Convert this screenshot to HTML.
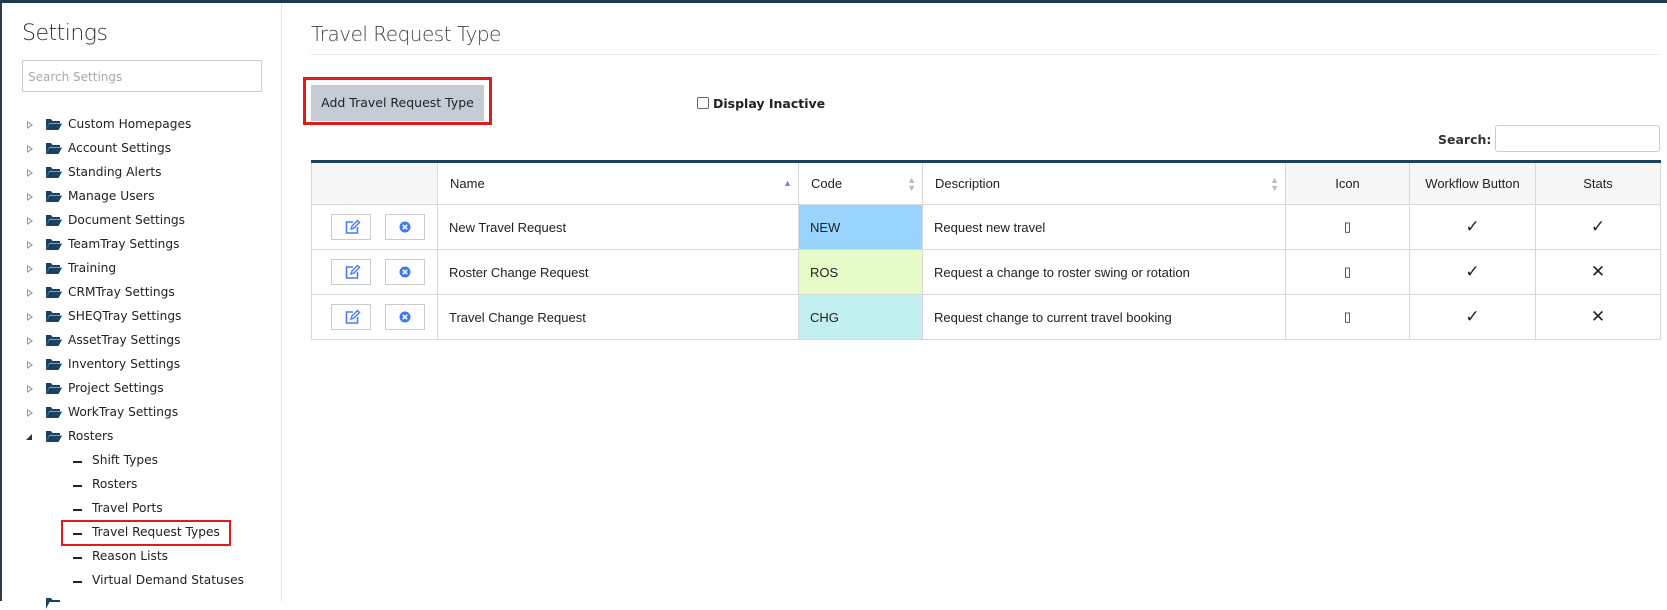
<!DOCTYPE html>
<html><head><meta charset="utf-8"><style>
*{box-sizing:border-box;margin:0;padding:0}
body{width:1667px;height:601px;overflow:hidden;background:#fff;font-family:"Liberation Sans",Arial,sans-serif;position:relative;color:#222}
.abs{position:absolute}
.side{font-family:"DejaVu Sans","Liberation Sans",sans-serif;font-size:12.2px;color:#222}
.tri{position:absolute;left:27px;width:0;height:0;border-top:4px solid transparent;border-bottom:4px solid transparent;border-left:6px solid #999}
.tri:after{content:"";position:absolute;left:-5px;top:-2.5px;border-top:2.5px solid transparent;border-bottom:2.5px solid transparent;border-left:3.5px solid #fff}
.fold{position:absolute;left:46px}
.item{position:absolute;left:68px;white-space:nowrap}
.dash{position:absolute;left:73px;width:9px;height:2px;background:#222}
.child{position:absolute;left:92px;white-space:nowrap}
table{border-collapse:collapse;position:absolute;left:311px;top:160px;width:1349px;font-size:13px;table-layout:fixed}
th,td{border:1px solid #d8d8d8;height:45px;vertical-align:middle}
th{font-weight:normal;text-align:left;padding-left:12px;height:43px;position:relative}
thead tr{border-top:3px solid #1b4361}
.g{background:#f6f6f6}
.c{text-align:center;padding-left:0}
.ck{font-size:17px;font-family:"DejaVu Sans",sans-serif}
td{padding-left:11px}
.btn{display:inline-block;width:40px;height:26px;border:1px solid #ccc;vertical-align:middle;position:relative}
.sort{position:absolute;right:6px;top:13px;font-size:9px;line-height:8px;color:#bbb}
</style></head><body>
<div class="abs" style="left:0;top:0;width:1667px;height:3px;background:#1b3a50"></div>
<div class="abs" style="left:0;top:0;width:2px;height:601px;background:#2a3a48"></div>
<div class="abs" style="left:281px;top:3px;width:1px;height:598px;background:#e6e6e6"></div>

<div class="abs" style="left:22px;top:21px;font-family:'DejaVu Sans',sans-serif;font-size:22px;color:#333;font-weight:300;letter-spacing:-0.5px">Settings</div>
<div class="abs" style="left:22px;top:60px;width:240px;height:32px;border:1px solid #ccc;border-radius:2px;font-family:'DejaVu Sans',sans-serif;font-size:12px;color:#aaa;padding:9px 5px">Search Settings</div>

<div class="abs side" style="left:61px;top:520px;width:170px;height:26px;border:2px solid #e01b1b"></div>

<div class="abs" style="left:311px;top:22px;font-family:'DejaVu Sans',sans-serif;font-size:20px;font-weight:300;color:#444;letter-spacing:-0.5px">Travel Request Type</div>
<div class="abs" style="left:311px;top:54px;width:1349px;height:1px;background:#e8e8e8"></div>

<div class="abs" style="left:303px;top:77px;width:189px;height:48px;border:3px solid #e01b1b"></div>
<div class="abs" style="left:311px;top:85px;width:173px;height:36px;background:#c5ccd6;font-family:'DejaVu Sans',sans-serif;font-size:12.5px;color:#222;text-align:center;line-height:36px">Add Travel Request Type</div>

<div class="abs" style="left:697px;top:97px;width:12px;height:12px;border:1px solid #666;border-radius:2px"></div>
<div class="abs" style="left:713px;top:96px;font-family:'DejaVu Sans',sans-serif;font-size:12.5px;font-weight:bold;color:#222">Display Inactive</div>

<div class="abs" style="left:1438px;top:132px;font-family:'DejaVu Sans',sans-serif;font-size:12.5px;font-weight:bold;color:#333">Search:</div>
<div class="abs" style="left:1495px;top:125px;width:165px;height:27px;border:1px solid #ccc;border-radius:3px"></div>

<table>
<colgroup><col style="width:126px"><col style="width:361px"><col style="width:124px"><col style="width:363px"><col style="width:124px"><col style="width:126px"><col style="width:125px"></colgroup>
<thead><tr>
<th class="g"></th>
<th>Name<span class="sort" style="color:#7b7fd8;top:16px">▲</span></th>
<th>Code<span class="sort">▲<br>▼</span></th>
<th>Description<span class="sort">▲<br>▼</span></th>
<th class="g c">Icon</th><th class="g c">Workflow Button</th><th class="g c">Stats</th>
</tr></thead>
<tbody>
<tr><td style="padding-left:19px"><span class="btn" style="margin-right:14px"><svg width="40" height="26" style="position:absolute;left:-1px;top:-1px"><path d="M22 8h-6.5v11h11v-6" fill="none" stroke="#4a7af0" stroke-width="1.6"/><path d="M20 15l1-3 5.5-5.5 2 2-5.5 5.5z" fill="none" stroke="#4a7af0" stroke-width="1.4"/></svg></span><span class="btn"><svg width="40" height="26" style="position:absolute;left:-1px;top:-1px"><circle cx="20" cy="13" r="5.5" fill="#3e79ee"/><path d="M17.8 10.8l4.4 4.4M22.2 10.8l-4.4 4.4" stroke="#fff" stroke-width="1.6"/></svg></span></td>
<td>New Travel Request</td><td style="background:#99d3ff">NEW</td><td>Request new travel</td><td class="c">▯</td><td class="c ck">✓</td><td class="c ck">✓</td></tr>
<tr><td style="padding-left:19px"><span class="btn" style="margin-right:14px"><svg width="40" height="26" style="position:absolute;left:-1px;top:-1px"><path d="M22 8h-6.5v11h11v-6" fill="none" stroke="#4a7af0" stroke-width="1.6"/><path d="M20 15l1-3 5.5-5.5 2 2-5.5 5.5z" fill="none" stroke="#4a7af0" stroke-width="1.4"/></svg></span><span class="btn"><svg width="40" height="26" style="position:absolute;left:-1px;top:-1px"><circle cx="20" cy="13" r="5.5" fill="#3e79ee"/><path d="M17.8 10.8l4.4 4.4M22.2 10.8l-4.4 4.4" stroke="#fff" stroke-width="1.6"/></svg></span></td>
<td>Roster Change Request</td><td style="background:#e6fcc8">ROS</td><td>Request a change to roster swing or rotation</td><td class="c">▯</td><td class="c ck">✓</td><td class="c ck">✕</td></tr>
<tr><td style="padding-left:19px"><span class="btn" style="margin-right:14px"><svg width="40" height="26" style="position:absolute;left:-1px;top:-1px"><path d="M22 8h-6.5v11h11v-6" fill="none" stroke="#4a7af0" stroke-width="1.6"/><path d="M20 15l1-3 5.5-5.5 2 2-5.5 5.5z" fill="none" stroke="#4a7af0" stroke-width="1.4"/></svg></span><span class="btn"><svg width="40" height="26" style="position:absolute;left:-1px;top:-1px"><circle cx="20" cy="13" r="5.5" fill="#3e79ee"/><path d="M17.8 10.8l4.4 4.4M22.2 10.8l-4.4 4.4" stroke="#fff" stroke-width="1.6"/></svg></span></td>
<td>Travel Change Request</td><td style="background:#c2efef">CHG</td><td>Request change to current travel booking</td><td class="c">▯</td><td class="c ck">✓</td><td class="c ck">✕</td></tr>
</tbody></table>

<div class="side" style="position:absolute;left:0;top:1px">
<div class="tri" style="top:120px"></div><svg class="fold" style="top:117px" width="16" height="13"><path d="M0 1h5l1.5 2H14v2H3.5L0 12z" fill="#1b4361"/><path d="M3.5 5.5H16L12.5 12H0z" fill="#1b4361"/></svg><div class="item" style="top:116px">Custom Homepages</div>
<div class="tri" style="top:144px"></div><svg class="fold" style="top:141px" width="16" height="13"><path d="M0 1h5l1.5 2H14v2H3.5L0 12z" fill="#1b4361"/><path d="M3.5 5.5H16L12.5 12H0z" fill="#1b4361"/></svg><div class="item" style="top:140px">Account Settings</div>
<div class="tri" style="top:168px"></div><svg class="fold" style="top:165px" width="16" height="13"><path d="M0 1h5l1.5 2H14v2H3.5L0 12z" fill="#1b4361"/><path d="M3.5 5.5H16L12.5 12H0z" fill="#1b4361"/></svg><div class="item" style="top:164px">Standing Alerts</div>
<div class="tri" style="top:192px"></div><svg class="fold" style="top:189px" width="16" height="13"><path d="M0 1h5l1.5 2H14v2H3.5L0 12z" fill="#1b4361"/><path d="M3.5 5.5H16L12.5 12H0z" fill="#1b4361"/></svg><div class="item" style="top:188px">Manage Users</div>
<div class="tri" style="top:216px"></div><svg class="fold" style="top:213px" width="16" height="13"><path d="M0 1h5l1.5 2H14v2H3.5L0 12z" fill="#1b4361"/><path d="M3.5 5.5H16L12.5 12H0z" fill="#1b4361"/></svg><div class="item" style="top:212px">Document Settings</div>
<div class="tri" style="top:240px"></div><svg class="fold" style="top:237px" width="16" height="13"><path d="M0 1h5l1.5 2H14v2H3.5L0 12z" fill="#1b4361"/><path d="M3.5 5.5H16L12.5 12H0z" fill="#1b4361"/></svg><div class="item" style="top:236px">TeamTray Settings</div>
<div class="tri" style="top:264px"></div><svg class="fold" style="top:261px" width="16" height="13"><path d="M0 1h5l1.5 2H14v2H3.5L0 12z" fill="#1b4361"/><path d="M3.5 5.5H16L12.5 12H0z" fill="#1b4361"/></svg><div class="item" style="top:260px">Training</div>
<div class="tri" style="top:288px"></div><svg class="fold" style="top:285px" width="16" height="13"><path d="M0 1h5l1.5 2H14v2H3.5L0 12z" fill="#1b4361"/><path d="M3.5 5.5H16L12.5 12H0z" fill="#1b4361"/></svg><div class="item" style="top:284px">CRMTray Settings</div>
<div class="tri" style="top:312px"></div><svg class="fold" style="top:309px" width="16" height="13"><path d="M0 1h5l1.5 2H14v2H3.5L0 12z" fill="#1b4361"/><path d="M3.5 5.5H16L12.5 12H0z" fill="#1b4361"/></svg><div class="item" style="top:308px">SHEQTray Settings</div>
<div class="tri" style="top:336px"></div><svg class="fold" style="top:333px" width="16" height="13"><path d="M0 1h5l1.5 2H14v2H3.5L0 12z" fill="#1b4361"/><path d="M3.5 5.5H16L12.5 12H0z" fill="#1b4361"/></svg><div class="item" style="top:332px">AssetTray Settings</div>
<div class="tri" style="top:360px"></div><svg class="fold" style="top:357px" width="16" height="13"><path d="M0 1h5l1.5 2H14v2H3.5L0 12z" fill="#1b4361"/><path d="M3.5 5.5H16L12.5 12H0z" fill="#1b4361"/></svg><div class="item" style="top:356px">Inventory Settings</div>
<div class="tri" style="top:384px"></div><svg class="fold" style="top:381px" width="16" height="13"><path d="M0 1h5l1.5 2H14v2H3.5L0 12z" fill="#1b4361"/><path d="M3.5 5.5H16L12.5 12H0z" fill="#1b4361"/></svg><div class="item" style="top:380px">Project Settings</div>
<div class="tri" style="top:408px"></div><svg class="fold" style="top:405px" width="16" height="13"><path d="M0 1h5l1.5 2H14v2H3.5L0 12z" fill="#1b4361"/><path d="M3.5 5.5H16L12.5 12H0z" fill="#1b4361"/></svg><div class="item" style="top:404px">WorkTray Settings</div>
<svg style="position:absolute;left:25px;top:432px" width="8" height="8"><path d="M7 1V7H1z" fill="#333"/></svg><svg class="fold" style="top:429px" width="16" height="13"><path d="M0 1h5l1.5 2H14v2H3.5L0 12z" fill="#1b4361"/><path d="M3.5 5.5H16L12.5 12H0z" fill="#1b4361"/></svg><div class="item" style="top:428px">Rosters</div>
<div class="dash" style="top:460px"></div><div class="child" style="top:452px">Shift Types</div>
<div class="dash" style="top:484px"></div><div class="child" style="top:476px">Rosters</div>
<div class="dash" style="top:508px"></div><div class="child" style="top:500px">Travel Ports</div>
<div class="dash" style="top:532px"></div><div class="child" style="top:524px">Travel Request Types</div>
<div class="dash" style="top:556px"></div><div class="child" style="top:548px">Reason Lists</div>
<div class="dash" style="top:580px"></div><div class="child" style="top:572px">Virtual Demand Statuses</div>
<svg class="fold" style="top:596px" width="16" height="13"><path d="M0 1h5l1.5 2H14v2H3.5L0 12z" fill="#1b4361"/></svg>
</div>
</body></html>
